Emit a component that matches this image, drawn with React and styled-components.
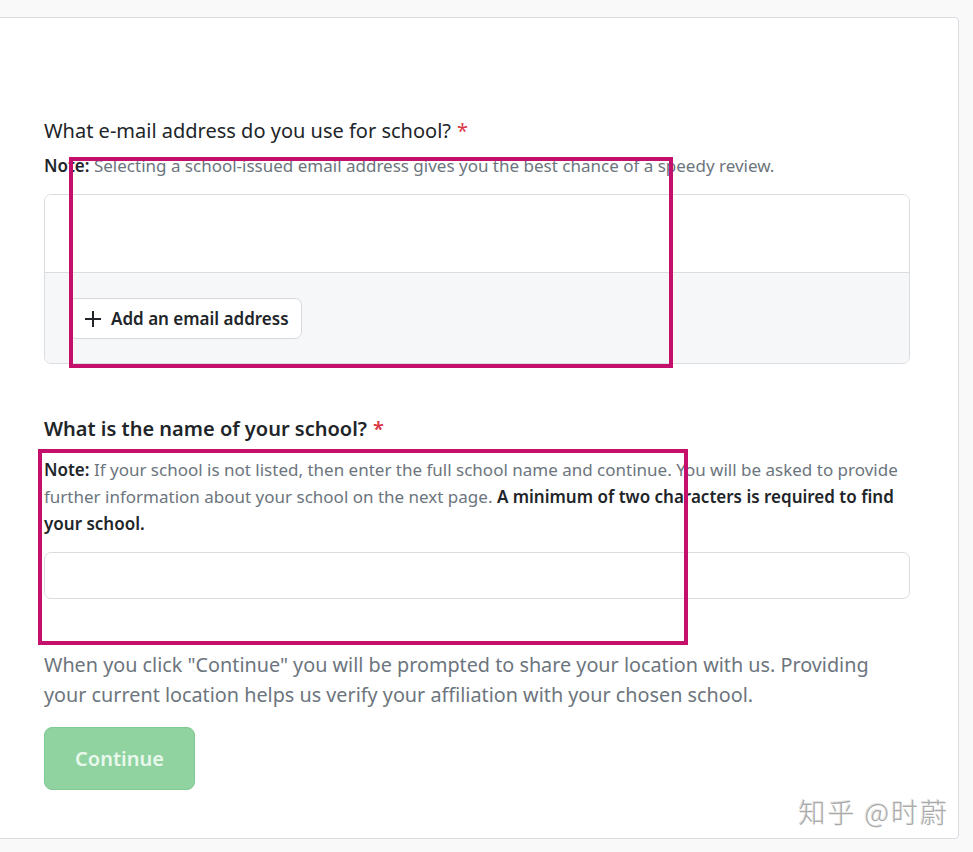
import React from 'react'
import styled, { createGlobalStyle } from 'styled-components'

const GlobalStyle = createGlobalStyle`
    body {
        margin: 0;
        background: #f9f9fa;
        font-family: "Noto Sans", "Liberation Sans", sans-serif;
        color: #212529;
    }
`

const Page = styled.div`
    position: relative;
    width: 973px;
    height: 852px;
    padding-top: 17px;
    box-sizing: border-box;
    overflow: hidden;
`

const Card = styled.div`
    width: 959px;
    box-sizing: border-box;
    background: #fff;
    border: 1px solid #dcdde3;
    border-left: none;
    border-radius: 0 4px 4px 0;
    padding: 99px 48px 48px 44px;
    display: flex;
    flex-direction: column;
    align-items: flex-start;
`

const Label = styled.div`
    font-size: 20px;
    line-height: 28px;
    font-weight: ${p => (p.$bold ? 600 : 400)};
    margin-top: ${p => p.$top || 0}px;
    color: #212529;
    .req {
        color: #dc3545;
        margin-left: 6px;
    }
`

const Note = styled.p`
    margin: ${p => p.$top || 0}px 0 0 0;
    font-size: ${p => p.$size || 17}px;
    line-height: ${p => p.$lh || 24}px;
    color: #6c757d;
    b {
        color: #212529;
        font-weight: 600;
    }
`

const EmailBox = styled.div`
    margin-top: 16px;
    width: 100%;
    box-sizing: border-box;
    border: 1px solid #dadce0;
    border-radius: 7px;
    overflow: hidden;
`

const EmailList = styled.div`
    height: 77px;
    background: #fff;
    border-bottom: 1px solid #dadce0;
`

const EmailActions = styled.div`
    background: #f6f7f9;
    padding: 25px 24px 24px 24px;
    display: flex;
`

const AddButton = styled.button`
    display: flex;
    align-items: center;
    gap: 9px;
    height: 41px;
    padding: 0 12px 0 14px;
    background: #fff;
    border: 1px solid #d6d8db;
    border-radius: 7px;
    font-family: inherit;
    font-size: 17px;
    font-weight: 600;
    color: #212529;
`

const TextInput = styled.input`
    margin-top: 15px;
    width: 100%;
    height: 47px;
    box-sizing: border-box;
    border: 1px solid #dadce0;
    border-radius: 7px;
    background: #fff;
`

const Hint = styled.p`
    margin: 51px 0 0 0;
    font-size: 19.8px;
    line-height: 30px;
    color: #6c757d;
`

const ContinueButton = styled.button`
    margin-top: 17px;
    width: 151px;
    height: 63px;
    border: 1px solid #7fca93;
    border-radius: 8px;
    background: #90d3a1;
    color: #e9f8ed;
    font-family: inherit;
    font-size: 20px;
    font-weight: 600;
`

const Annotation = styled.div`
    position: absolute;
    left: ${p => p.$x}px;
    top: ${p => p.$y}px;
    width: ${p => p.$w}px;
    height: ${p => p.$h}px;
    box-sizing: border-box;
    border: 4px solid #c5106b;
    pointer-events: none;
`

const Watermark = styled.div`
    position: absolute;
    right: 24px;
    bottom: 21px;
    font-family: "Noto Sans CJK SC", sans-serif;
    font-size: 27px;
    font-weight: 300;
    letter-spacing: 2px;
    color: #a9a9a9;
    text-shadow: 1px 1px 0 #fff, -1px -1px 0 #e4e4e4;
`

const PlusIcon = () => (
    <svg width="18" height="18" viewBox="0 0 18 18">
        <path d="M9 1v16M1 9h16" stroke="#212529" strokeWidth="2" />
    </svg>
)

function App() {
    return (
        <Page>
            <GlobalStyle />
            <Card>
                <Label>What e-mail address do you use for school?<span className="req">*</span></Label>
                <Note $top={9}><b>Note:</b> Selecting a school-issued email address gives you the best chance of a speedy review.</Note>
                <EmailBox>
                    <EmailList />
                    <EmailActions>
                        <AddButton><PlusIcon />Add an email address</AddButton>
                    </EmailActions>
                </EmailBox>

                <Label $bold $top={51}>What is the name of your school?<span className="req">*</span></Label>
                <Note $top={13} $lh={27}>
                    <b>Note:</b> If your school is not listed, then enter the full school name and continue. You will be asked to provide further information about your school on the next page. <b>A minimum of two characters is required to find your school.</b>
                </Note>
                <TextInput type="text" />

                <Hint>When you click "Continue" you will be prompted to share your location with us. Providing your current location helps us verify your affiliation with your chosen school.</Hint>
                <ContinueButton disabled>Continue</ContinueButton>
            </Card>

            <Annotation $x={69} $y={157} $w={604} $h={211} />
            <Annotation $x={38} $y={449} $w={650} $h={196} />
            <Watermark>知乎 @时蔚</Watermark>
        </Page>
    )
}

export default App
